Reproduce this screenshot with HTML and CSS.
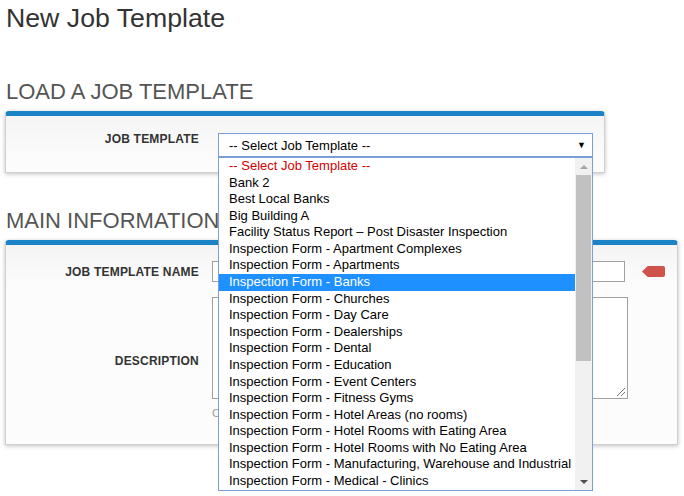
FILE: index.html
```html
<!DOCTYPE html>
<html>
<head>
<meta charset="utf-8">
<link rel="stylesheet" href="styles.css">
</head>
<body>
<h1 class="page-title">New Job Template</h1>

<h2 class="section-title first">LOAD A JOB TEMPLATE</h2>
<div class="panel panel-load">
  <div class="row">
    <div class="label">JOB TEMPLATE</div>
    <div class="select-wrap">
      <div class="select"><span>-- Select Job Template --</span><span class="caret">&#9660;</span></div>
      <div class="dropdown">
        <ul class="options">
          <li class="placeholder">-- Select Job Template --</li>
          <li>Bank 2</li>
          <li>Best Local Banks</li>
          <li>Big Building A</li>
          <li>Facility Status Report – Post Disaster Inspection</li>
          <li>Inspection Form - Apartment Complexes</li>
          <li>Inspection Form - Apartments</li>
          <li class="selected">Inspection Form - Banks</li>
          <li>Inspection Form - Churches</li>
          <li>Inspection Form - Day Care</li>
          <li>Inspection Form - Dealerships</li>
          <li>Inspection Form - Dental</li>
          <li>Inspection Form - Education</li>
          <li>Inspection Form - Event Centers</li>
          <li>Inspection Form - Fitness Gyms</li>
          <li>Inspection Form - Hotel Areas (no rooms)</li>
          <li>Inspection Form - Hotel Rooms with Eating Area</li>
          <li>Inspection Form - Hotel Rooms with No Eating Area</li>
          <li>Inspection Form - Manufacturing, Warehouse and Industrial</li>
          <li>Inspection Form - Medical - Clinics</li>
        </ul>
        <div class="scrollbar">
          <div class="arrow up"></div>
          <div class="track"><div class="thumb"></div></div>
          <div class="arrow down"></div>
        </div>
      </div>
    </div>
  </div>
</div>

<h2 class="section-title">MAIN INFORMATION</h2>
<div class="panel panel-main">
  <div class="row row-name">
    <div class="label">JOB TEMPLATE NAME</div>
    <div class="input"></div>
    <div class="req-tag"></div>
  </div>
  <div class="row row-desc">
    <div class="label">DESCRIPTION</div>
    <div class="desc-field">
      <div class="textarea"><span class="grip"></span></div>
      <div class="counter">Characters remaining: 500</div>
    </div>
  </div>
</div>
</body>
</html>
```

FILE: styles.css
```css
* { box-sizing: border-box; }

html { background: #fff; }

body {
  margin: 0;
  padding: 0 0 0 5px;
  min-height: 496px;
  font-family: "Liberation Sans", Arial, sans-serif;
  color: #333;
  background: #fff;
}

.page-title {
  margin: 3px 0 0 1px;
  font-size: 26.7px;
  line-height: 30px;
  font-weight: normal;
  color: #333;
}

.section-title {
  margin: 35px 0 6px 1px;
  font-size: 22px;
  line-height: 26px;
  font-weight: normal;
  color: #555;
}
.section-title.first { margin-top: 46px; }

.panel {
  border: 1px solid #cfcfcf;
  border-top: 5px solid #1b84c6;
  border-radius: 4px 4px 0 0;
  background: linear-gradient(#f4f4f4, #fcfcfc 40px, #fcfcfc);
  box-shadow: 0 1px 4px rgba(0, 0, 0, 0.25);
}

.panel-load {
  width: 600px;
  height: 62px;
  padding-top: 17px;
}

.panel-main {
  width: 673px;
  height: 205px;
  padding-top: 16px;
}

.row {
  display: flex;
  align-items: center;
}

.label {
  width: 193px;
  flex: none;
  text-align: right;
  font-size: 12px;
  font-weight: bold;
  letter-spacing: 0.2px;
  line-height: 14px;
  color: #333;
}

.panel-load .label {
  align-self: flex-start;
  margin-top: -1px;
}

.select-wrap {
  position: relative;
  margin-left: 19px;
}

.select {
  width: 375px;
  height: 24px;
  border: 1px solid #7b9ed8;
  background: #fff;
  display: flex;
  align-items: center;
  justify-content: space-between;
  padding: 0 6px 0 10px;
  font-size: 13px;
  color: #000;
}

.caret {
  font-size: 9px;
  color: #000;
}

.dropdown {
  position: absolute;
  left: 0;
  top: 24px;
  width: 375px;
  height: 334px;
  border: 1px solid #7b9ed8;
  background: #fff;
  display: flex;
  z-index: 5;
}

.options {
  list-style: none;
  margin: 0;
  padding: 0;
  flex: 1;
  min-width: 0;
  overflow: hidden;
}

.options li {
  height: 16.58px;
  line-height: 16.58px;
  padding-left: 10px;
  font-size: 13px;
  color: #000;
  white-space: nowrap;
}

.options li.placeholder { color: #d40000; }

.options li.selected {
  background: #1e90ff;
  color: #fff;
}

.scrollbar {
  width: 17px;
  flex: none;
  background: #f1f1f1;
  display: flex;
  flex-direction: column;
}

.arrow {
  height: 17px;
  flex: none;
  display: flex;
  align-items: center;
  justify-content: center;
}
.arrow.up::before {
  content: "";
  border-left: 4px solid transparent;
  border-right: 4px solid transparent;
  border-bottom: 4px solid #a3a3a3;
}
.arrow.down::before {
  content: "";
  border-left: 4px solid transparent;
  border-right: 4px solid transparent;
  border-top: 4px solid #505050;
}

.track {
  flex: 1;
  padding: 0 1px;
}

.thumb {
  height: 186px;
  background: #c1c1c1;
}

.input {
  margin-left: 13px;
  width: 413px;
  height: 21px;
  border: 1px solid #a0a0a0;
  background: #fff;
}

.req-tag {
  margin-left: 17px;
  width: 23px;
  height: 11px;
  background: #d0534b;
  clip-path: polygon(0 50%, 25% 0, 100% 0, 100% 100%, 25% 100%);
  border-radius: 0 2px 2px 0;
}

.row-desc {
  margin-top: 15px;
}

.desc-field {
  margin-left: 13px;
}

.textarea {
  position: relative;
  width: 416px;
  height: 102px;
  border: 1px solid #a0a0a0;
  background: #fff;
}

.grip {
  position: absolute;
  right: 2px;
  bottom: 2px;
  width: 8px;
  height: 8px;
  background: linear-gradient(135deg, transparent 45%, #777 45%, #777 52%, transparent 52%, transparent 70%, #777 70%, #777 77%, transparent 77%);
}

.counter {
  margin-top: 8px;
  height: 18px;
  font-size: 11px;
  color: #999;
}
```
